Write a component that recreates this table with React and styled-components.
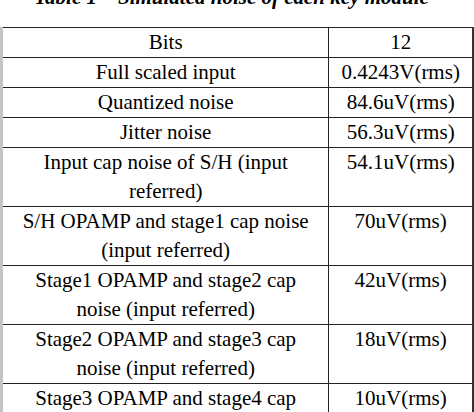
import React from "react";
import styled, { createGlobalStyle } from "styled-components";

const Global = createGlobalStyle`
  html, body { margin: 0; padding: 0; background: #fff; }
  body { overflow: hidden; width: 474px; height: 412px; }
`;

const Page = styled.div`
  width: 474px;
  font-family: "Liberation Serif", "Times New Roman", serif;
  color: #000;
`;

const Caption = styled.div`
  margin-top: -14px;
  height: 23px;
  line-height: 23px;
  font-size: 21px;
  font-weight: bold;
  font-style: italic;
  text-align: center;
  padding-right: 11px;
  white-space: nowrap;
`;

const Table = styled.table`
  margin-top: 18px;
  width: 474px;
  border-collapse: collapse;
  table-layout: fixed;
  border-left: 3px solid #c4c4c4;
  border-right: 2px solid #333;
`;

const Col = styled.col`
  width: ${(p) => p.$w}px;
`;

const Cell = styled.td`
  border-top: 1px solid #222;
  border-bottom: 1px solid #222;
  border-left: ${(p) => (p.$value ? "1px solid #222" : "none")};
  padding: 0 ${(p) => (p.$value ? "1px" : "4px")};
  font-size: 21px;
  line-height: 29px;
  text-align: center;
  vertical-align: top;
  white-space: nowrap;
`;

const rows = [
  ["Bits", "12"],
  ["Full scaled input", "0.4243V(rms)"],
  ["Quantized noise", "84.6uV(rms)"],
  ["Jitter noise", "56.3uV(rms)"],
  [["Input cap noise of S/H (input", "referred)"], "54.1uV(rms)"],
  [["S/H OPAMP and stage1 cap noise", "(input referred)"], "70uV(rms)"],
  [["Stage1 OPAMP and stage2 cap", "noise (input referred)"], "42uV(rms)"],
  [["Stage2 OPAMP and stage3 cap", "noise (input referred)"], "18uV(rms)"],
  [["Stage3 OPAMP and stage4 cap", "noise (input referred)"], "10uV(rms)"],
];

export default function App() {
  return (
    <Page>
      <Global />
      <Caption>Table 1 – Simulated noise of each key module</Caption>
      <Table>
        <colgroup>
          <Col $w={327} />
          <Col $w={144} />
        </colgroup>
        <tbody>
          {rows.map(([name, value], i) => (
            <tr key={i}>
              <Cell>
                {Array.isArray(name)
                  ? name.map((l, j) => <div key={j}>{l}</div>)
                  : name}
              </Cell>
              <Cell $value>{value}</Cell>
            </tr>
          ))}
        </tbody>
      </Table>
    </Page>
  );
}
